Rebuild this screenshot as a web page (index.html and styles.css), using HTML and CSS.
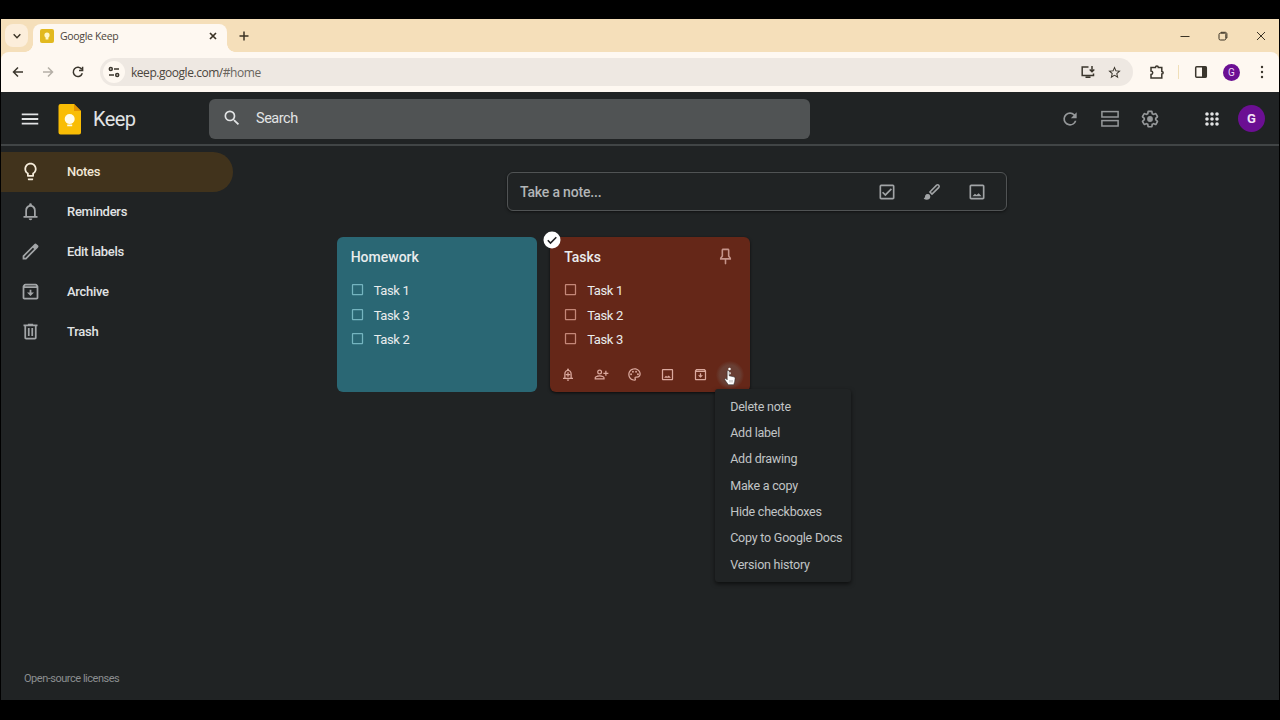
FILE: index.html
```html
<!DOCTYPE html>
<html lang="en">
<head>
<meta charset="utf-8">
<title>Google Keep</title>
<link rel="stylesheet" href="styles.css">
</head>
<body>
<svg class="defs" width="0" height="0" aria-hidden="true">
  <symbol id="archive" viewBox="0 0 24 24"><path d="M20.54 5.23l-1.39-1.68C18.88 3.21 18.47 3 18 3H6c-.47 0-.88.21-1.16.55L3.46 5.23C3.17 5.57 3 6.02 3 6.5V19c0 1.1.9 2 2 2h14c1.1 0 2-.9 2-2V6.5c0-.48-.17-.93-.46-1.27zM6.24 5h11.52l.83 1H5.42l.82-1zM5 19V8h14v11H5zm8-9h-2v3H8l4 4 4-4h-3v-3z"/></symbol>
  <symbol id="image" viewBox="0 0 24 24"><path d="M19 5v14H5V5h14m0-2H5c-1.1 0-2 .9-2 2v14c0 1.1.9 2 2 2h14c1.1 0 2-.9 2-2V5c0-1.1-.9-2-2-2zm-5 10.500l-2.500 2-2-1.500L6.500 17h11l-3.500-3.500z"/></symbol>
  <symbol id="box" viewBox="0 0 24 24"><path d="M19 5v14H5V5h14m0-2H5c-1.1 0-2 .9-2 2v14c0 1.100.9 2 2 2h14c1.100 0 2-.9 2-2V5c0-1.100-.9-2-2-2z"/></symbol>
</svg>
<div class="window">
  <div class="chrome">
  <div class="tabstrip">
    <div class="tab-search"><svg viewBox="0 0 12 12" width="10" height="10"><path class="line thick" d="M2 4l4 4 4-4"/></svg></div>
    <div class="tab">
      <svg class="favicon" viewBox="0 0 14 14" width="14" height="14"><rect width="14" height="14" rx="2" fill="#e2b91f"/><circle cx="7" cy="6" r="2.600" fill="#fff6c9"/><path d="M5.600 8h2.800v2.500H5.600z" fill="#fff6c9"/></svg>
      <span class="tab-title">Google Keep</span>
      <svg class="tab-close" viewBox="0 0 10 10" width="10" height="10"><path class="line thick" d="M2 2l6 6M8 2l-6 6"/></svg>
    </div>
    <svg class="new-tab" viewBox="0 0 12 12" width="12" height="12"><path class="line" d="M6 1.500v9M1.500 6h9"/></svg>
    <div class="win-controls">
      <svg viewBox="0 0 12 12" width="12" height="12"><path class="line thin" d="M1.500 6.500h9"/></svg>
      <svg viewBox="0 0 12 12" width="12" height="12"><rect class="line thin" x="2" y="3.200" width="6.800" height="6.800" rx="1.400"/><path class="line thin" d="M4 3V2.300h4.200c1 0 1.700.7 1.700 1.700v4H9"/></svg>
      <svg viewBox="0 0 12 12" width="12" height="12"><path class="line thin" d="M2 2l8 8M10 2l-8 8"/></svg>
    </div>
  </div>

  <div class="toolbar">
    <div class="nav">
      <svg viewBox="0 0 12 12" width="12" height="12"><path class="line" d="M11 6H1.500M6 1.500L1.500 6 6 10.500"/></svg>
      <svg class="faded" viewBox="0 0 12 12" width="12" height="12"><path class="line" d="M1 6h9.500M6 1.500L10.500 6 6 10.500"/></svg>
      <svg viewBox="0 0 12 12" width="12" height="12"><path class="line" d="M10.300 7.300A4.600 4.600 0 1 1 9.700 3.300M10.600.8v3.600H7"/></svg>
    </div>
    <div class="omnibox">
      <div class="site-info"><svg viewBox="0 0 12 12" width="12" height="12"><circle class="line" cx="2.800" cy="3" r="1.500"/><path class="line" d="M6 3h5M1 9h5"/><circle class="line" cx="9.200" cy="9" r="1.500"/></svg></div>
      <span class="url">keep.google.com/<em>#home</em></span>
      <svg class="install" viewBox="0 0 16 14" width="16" height="14"><path class="line" d="M8.500 2H2.200v8.500h11.300V8.500M5.500 12.300h5M12 1v5.500M9.700 4.500L12 6.700l2.300-2.200"/></svg>
      <svg class="star" viewBox="0 0 24 24" width="15" height="15"><path d="M22 9.240l-7.190-.62L12 2 9.190 8.630 2 9.240l5.460 4.730L5.820 21 12 17.270 18.180 21l-1.630-7.030L22 9.240zM12 15.400l-3.760 2.270 1-4.280-3.320-2.880 4.380-.38L12 6.100l1.710 4.040 4.380.38-3.320 2.880 1 4.280L12 15.400z"/></svg>
    </div>
    <svg class="ext" viewBox="0 0 16 16" width="16" height="16"><path class="line" d="M2 3.500h4.500c0-1.900 2.800-1.900 2.800 0h3.500v3.900c1.800 0 1.800 2.600 0 2.600v4H2v-3.600c2.300-.2 2.300-3.100 0-3.300z"/></svg>
    <i class="divider"></i>
    <svg class="panel" viewBox="0 0 14 14" width="14" height="14"><rect class="line" x="1.700" y="1.700" width="10.600" height="10.600" rx="1"/><path d="M8 1.700h4.500v10.600H8z"/></svg>
    <span class="profile">G</span>
    <svg class="kebab" viewBox="0 0 4 14" width="4" height="14"><circle cx="2" cy="2" r="1.200"/><circle cx="2" cy="7" r="1.200"/><circle cx="2" cy="12" r="1.200"/></svg>
  </div>
  </div>

  <header class="app-bar">
    <svg class="menu-btn" viewBox="0 0 24 24" width="22" height="22"><path d="M3 18h18v-2H3v2zm0-5h18v-2H3v2zm0-7v2h18V6H3z"/></svg>
    <svg class="logo" viewBox="0 0 24 32" width="24" height="32"><path d="M2.500 1H16l7 7v21.500a2 2 0 0 1-2 2H2.500a2 2 0 0 1-2-2V3a2 2 0 0 1 2-2z" fill="#f9bd05"/><path d="M16 1l7 7h-7z" fill="#e39400"/><circle cx="11.700" cy="16" r="5" fill="#fffbe8"/><path d="M9.200 19h5v1.300h-5zM9.200 21.500h5v1.700h-5z" fill="#fffbe8"/></svg>
    <span class="brand">Keep</span>
    <div class="search">
      <svg viewBox="0 0 24 24" width="20" height="20"><path d="M15.500 14h-.79l-.28-.27A6.471 6.471 0 0 0 16 9.500 6.500 6.500 0 1 0 9.500 16c1.610 0 3.090-.59 4.230-1.570l.27.28v.79l5 4.990L20.490 19l-4.990-5zm-6 0C7.010 14 5 11.990 5 9.500S7.010 5 9.500 5 14 7.010 14 9.500 11.990 14 9.500 14z"/></svg>
      <span>Search</span>
    </div>
    <div class="actions">
      <svg viewBox="0 0 24 24" width="20" height="20"><path d="M17.650 6.350A7.960 7.960 0 0 0 12 4a8 8 0 1 0 7.730 10h-2.080A5.990 5.990 0 0 1 12 18a6 6 0 1 1 0-12c1.660 0 3.140.69 4.220 1.780L13 11h7V4l-2.350 2.350z"/></svg>
      <svg viewBox="0 0 20 20" width="20" height="20"><rect class="line" x="1.900" y="2.600" width="16.200" height="5.400"/><rect class="line" x="1.900" y="11.600" width="16.200" height="5.400"/></svg>
      <svg viewBox="0 0 24 24" width="20" height="20"><path d="M13.850 22.250h-3.700c-.74 0-1.360-.54-1.450-1.270l-.27-1.890c-.27-.14-.53-.29-.79-.46l-1.800.72c-.7.26-1.470-.03-1.810-.65L2.200 15.530c-.35-.66-.2-1.440.36-1.880l1.530-1.190c-.01-.15-.02-.3-.02-.46 0-.15.010-.31.020-.46l-1.520-1.190c-.59-.45-.74-1.260-.37-1.880l1.850-3.190c.34-.62 1.110-.9 1.790-.63l1.810.73c.26-.17.52-.32.78-.46l.27-1.910c.09-.7.710-1.250 1.440-1.250h3.700c.74 0 1.360.54 1.450 1.270l.27 1.890c.27.14.53.29.79.46l1.800-.72c.71-.26 1.480.03 1.820.65l1.840 3.180c.36.66.2 1.440-.36 1.880l-1.520 1.190c.01.150.02.3.02.46s-.01.310-.02.460l1.520 1.190c.56.45.72 1.230.37 1.860l-1.860 3.220c-.34.620-1.110.9-1.800.630l-1.800-.72c-.26.17-.52.320-.78.460l-.27 1.910c-.1.680-.72 1.220-1.460 1.220zm-3.230-2h2.760l.37-2.550.53-.22c.44-.18.88-.44 1.340-.78l.45-.34 2.380.96 1.380-2.400-2.030-1.580.07-.56c.03-.26.06-.51.06-.78s-.03-.53-.06-.78l-.07-.56 2.030-1.580-1.390-2.400-2.390.96-.45-.35c-.42-.32-.87-.58-1.330-.77l-.52-.22-.37-2.550h-2.760l-.37 2.550-.53.210c-.44.190-.88.440-1.340.790l-.45.330-2.380-.95-1.390 2.390 2.030 1.580-.07.560a7 7 0 0 0-.06.790c0 .26.020.53.060.780l.07.560-2.030 1.580 1.380 2.400 2.390-.96.45.350c.43.330.86.580 1.330.770l.53.220.38 2.550z"/><circle cx="12" cy="12" r="3.500"/></svg>
      <svg class="apps" viewBox="0 0 24 24" width="20" height="20"><g><circle cx="6" cy="6" r="2.150"/><circle cx="12" cy="6" r="2.150"/><circle cx="18" cy="6" r="2.150"/><circle cx="6" cy="12" r="2.150"/><circle cx="12" cy="12" r="2.150"/><circle cx="18" cy="12" r="2.150"/><circle cx="6" cy="18" r="2.150"/><circle cx="12" cy="18" r="2.150"/><circle cx="18" cy="18" r="2.150"/></g></svg>
      <span class="avatar">G</span>
    </div>
  </header>

  <div class="body">
    <aside class="sidebar">
      <a class="item active"><svg viewBox="0 0 24 24"><path d="M9 21c0 .5.4 1 1 1h4c.6 0 1-.5 1-1v-1H9v1zm3-19C8.100 2 5 5.100 5 9c0 2.400 1.200 4.500 3 5.700V17c0 .5.4 1 1 1h6c.6 0 1-.5 1-1v-2.300c1.800-1.300 3-3.400 3-5.700 0-3.900-3.100-7-7-7zm2.900 11.100l-.9.6V16h-4v-2.300l-.9-.6C7.800 12.200 7 10.600 7 9c0-2.800 2.200-5 5-5s5 2.200 5 5c0 1.600-.8 3.200-2.100 4.100z"/></svg><span>Notes</span></a>
      <a class="item"><svg viewBox="0 0 24 24"><path d="M18 17v-6c0-3.070-1.630-5.640-4.500-6.320V4a1.500 1.500 0 0 0-3 0v.68C7.640 5.360 6 7.920 6 11v6H4v2h16v-2h-2zm-2 0H8v-6c0-2.480 1.510-4.500 4-4.500s4 2.020 4 4.500v6zm-4 5c1.100 0 2-.9 2-2h-4c0 1.100.9 2 2 2z"/></svg><span>Reminders</span></a>
      <a class="item"><svg viewBox="0 0 24 24"><path d="M20.410 4.940l-1.350-1.350a2 2 0 0 0-2.830 0L3 16.820V21h4.180L20.410 7.770a2 2 0 0 0 0-2.830zM6.350 19H5v-1.350l9.820-9.820 1.350 1.350L6.350 19z"/></svg><span>Edit labels</span></a>
      <a class="item"><svg><use href="#archive"/></svg><span>Archive</span></a>
      <a class="item"><svg viewBox="0 0 24 24"><path d="M15 4V3H9v1H4v2h1v13c0 1.100.9 2 2 2h10c1.100 0 2-.9 2-2V6h1V4h-5zm2 15H7V6h10v13zM9 8h2v9H9zm4 0h2v9h-2z"/></svg><span>Trash</span></a>
      <span class="licenses">Open-source licenses</span>
    </aside>

    <main class="content">
      <div class="composer">
        <span>Take a note...</span>
        <svg viewBox="0 0 24 24"><path d="M19 3H5a2 2 0 0 0-2 2v14c0 1.100.9 2 2 2h14c1.100 0 2-.9 2-2V5a2 2 0 0 0-2-2zm0 16H5V5h14v14zM18 9l-1.400-1.400-6.600 6.600-2.600-2.600L6 13l4 4z"/></svg>
        <svg viewBox="0 0 24 24"><path d="M2 20c3 2.500 8 1.500 8-2.600a3.200 3.200 0 0 0-6-1.400C3.500 17.300 4 18.900 2 20z"/><path fill="none" stroke="currentColor" stroke-width="1.900" d="M9.500 12l8-8.200c2-1.300 4 .7 2.700 2.700L12 14.500z"/></svg>
        <svg><use href="#image"/></svg>
      </div>

      <div class="notes">
        <article class="note teal">
          <h2>Homework</h2>
          <ul>
            <li><svg><use href="#box"/></svg>Task 1</li>
            <li><svg><use href="#box"/></svg>Task 3</li>
            <li><svg><use href="#box"/></svg>Task 2</li>
          </ul>
        </article>
        <article class="note red">
          <svg class="selected" viewBox="0 0 18 18" width="18" height="18"><circle cx="9" cy="9" r="8.500" fill="#fff"/><path d="M4.800 9.300l2.700 2.700 5.800-5.800" fill="none" stroke="#202124" stroke-width="1.600"/></svg>
          <h2>Tasks<svg class="pin" viewBox="0 0 24 24" width="19" height="19"><path d="M17 4v7l2 3v2h-6v5l-1 1-1-1v-5H5v-2l2-3V4c0-1.100.9-2 2-2h6c1.110 0 2 .89 2 2zM9 4v7.750L7.500 14h9L15 11.750V4H9z"/></svg></h2>
          <ul>
            <li><svg><use href="#box"/></svg>Task 1</li>
            <li><svg><use href="#box"/></svg>Task 2</li>
            <li><svg><use href="#box"/></svg>Task 3</li>
          </ul>
          <div class="note-tools">
            <svg viewBox="0 0 24 24"><path d="M18 17v-6c0-3.070-1.630-5.640-4.500-6.320V4a1.500 1.500 0 0 0-3 0v.68C7.640 5.360 6 7.920 6 11v6H4v2h16v-2h-2zm-2 0H8v-6c0-2.480 1.510-4.500 4-4.500s4 2.020 4 4.500v6zm-4 5c1.100 0 2-.9 2-2h-4c0 1.100.9 2 2 2zM11 8.500h2V11h2.500v2H13v2.500h-2V13H8.500v-2H11z"/></svg>
            <svg viewBox="0 0 24 24"><path d="M9 12a4 4 0 1 0 0-8 4 4 0 0 0 0 8zm0-6a2 2 0 1 1 0 4 2 2 0 0 1 0-4zm0 7c-2.670 0-8 1.340-8 4v3h16v-3c0-2.660-5.330-4-8-4zm6 5H3v-.99C3.200 16.290 6.300 15 9 15s5.800 1.290 6 2v1zM18 6h2v3h3v2h-3v3h-2v-3h-3V9h3z"/></svg>
            <svg viewBox="0 0 24 24"><path d="M12 22C6.490 22 2 17.510 2 12S6.490 2 12 2s10 4.040 10 9c0 3.310-2.690 6-6 6h-1.770c-.28 0-.5.22-.5.5 0 .12.050.23.130.33.41.47.64 1.060.64 1.670A2.500 2.500 0 0 1 12 22zm0-18c-4.410 0-8 3.590-8 8s3.590 8 8 8c.28 0 .5-.22.5-.5a.54.54 0 0 0-.14-.35c-.41-.46-.63-1.050-.63-1.650a2.500 2.500 0 0 1 2.500-2.500H16c2.210 0 4-1.790 4-4 0-3.860-3.590-7-8-7z"/><circle cx="6.500" cy="11.500" r="1.500"/><circle cx="9.500" cy="7.500" r="1.500"/><circle cx="14.500" cy="7.500" r="1.500"/><circle cx="17.500" cy="11.500" r="1.500"/></svg>
            <svg><use href="#image"/></svg>
            <svg><use href="#archive"/></svg>
            <span class="more">
              <svg viewBox="0 0 24 24"><path d="M12 1a2 2 0 1 1 0 4 2 2 0 0 1 0-4zm0 7a2 2 0 1 1 0 4 2 2 0 0 1 0-4z"/></svg>
              <svg class="cursor" viewBox="0 0 12 16"><path d="M3.200 1.500c0-1.300 2-1.300 2 0v4.300l4.500 1c1 .2 1.500.9 1.400 1.800l-.5 3.300-.9 2.800H4.300L1 10.100c-.8-1 .5-2 1.300-1.200l.9.900z" fill="#fff" stroke="#222" stroke-width=".5"/><path d="M6 10v2.500M8 10v2.500" stroke="#777" stroke-width=".6"/></svg>
            </span>
          </div>
          <div class="menu">
            <span>Delete note</span>
            <span>Add label</span>
            <span>Add drawing</span>
            <span>Make a copy</span>
            <span>Hide checkboxes</span>
            <span>Copy to Google Docs</span>
            <span>Version history</span>
          </div>
        </article>
      </div>
    </main>
  </div>
</div>
</body>
</html>
```
FILE: styles.css
```css
* { box-sizing: border-box; }
body {
  margin: 0;
  height: 720px;
  padding: 19px 1px;
  background: #000;
  overflow: hidden;
  font-family: Roboto, "Liberation Sans", sans-serif;
}
svg { display: block; flex: none; fill: currentColor; }
.defs { position: absolute; }
.line { fill: none; stroke: currentColor; stroke-width: 1.5; }
.thin { stroke-width: 1; }
.thick { stroke-width: 1.700; }

.window { display: flex; flex-direction: column; height: 681px; background: #202324; }

/* Browser chrome */
.chrome { background: #f5dfba; }
.tabstrip {
  display: flex;
  align-items: center;
  height: 33px;
  color: #3b3325;
  font-family: "Open Sans", "Noto Sans", sans-serif;
}
.tab-search {
  display: grid;
  place-items: center;
  width: 23px;
  height: 23px;
  margin-left: 4px;
  border-radius: 8px;
  background: #fceedb;
}
.tab {
  position: relative;
  display: flex;
  align-items: center;
  align-self: flex-end;
  width: 194px;
  height: 28px;
  margin-left: 5px;
  padding: 0 9px 5px 7px;
  border-radius: 8px 8px 0 0;
  background: #fef8f1;
}
.tab::before, .tab::after {
  content: "";
  position: absolute;
  bottom: 0;
  width: 8px;
  height: 8px;
}
.tab::before { right: 100%; background: radial-gradient(circle at 0 0, #0000 7.500px, #fef8f1 8px); }
.tab::after { left: 100%; background: radial-gradient(circle at 100% 0, #0000 7.500px, #fef8f1 8px); }
.tab-title { margin-left: 6px; font-size: 10.500px; letter-spacing: -.45px; color: #4c453b; }
.tab-close { margin-left: auto; }
.new-tab { margin-left: 11px; }
.win-controls { display: flex; gap: 26px; margin: 0 12px 0 auto; }

.toolbar {
  display: flex;
  align-items: center;
  height: 40px;
  padding-right: 15px;
  background: #fef8f1;
  border-radius: 8px 8px 0 0;
  color: #3b362d;
}
.nav { display: flex; gap: 18px; margin-left: 11px; }
.faded { color: #b5afa7; }
.omnibox {
  display: flex;
  align-items: center;
  width: 1033px;
  height: 28px;
  margin-left: 16px;
  padding: 0 11px 0 3px;
  border-radius: 14px;
  background: #eee8e2;
}
.site-info {
  display: grid;
  place-items: center;
  width: 22px;
  height: 22px;
  border-radius: 50%;
  background: #fef8f1;
}
.url { margin-left: 6px; font: 12px "Open Sans", "Noto Sans", sans-serif; letter-spacing: -.46px; color: #4b463e; }
.tab-title { letter-spacing: -.32px; }
.url em { font-style: normal; color: #6a655e; }
.install { margin-left: auto; }
.star { margin-left: 11px; }
.ext { margin-left: 16px; }
.divider { width: 1px; height: 14px; margin: 0 15px 0 13px; background: #f0dfb9; }
.profile {
  display: grid;
  place-items: center;
  width: 17px;
  height: 17px;
  margin: 0 20px 0 15px;
  border-radius: 50%;
  background: #6b0f93;
  color: #efd9f7;
  font-size: 10px;
}

/* App bar */
.app-bar {
  display: flex;
  align-items: center;
  height: 54px;
  padding: 1px 7px 0 18px;
  border-bottom: 2px solid #414546;
  color: #e2e4e5;
}
.logo { margin-left: 17px; }
.brand { width: 115.500px; margin-left: 11px; font-size: 20px; letter-spacing: -.6px; }
.search {
  display: flex;
  align-items: center;
  gap: 14px;
  width: 601.500px;
  height: 40px;
  padding: 0 0 1px 13.500px;
  border-radius: 6px;
  background: #505354;
  font-size: 14.500px;
  letter-spacing: -.48px;
}
.actions { display: flex; align-items: center; margin-left: auto; color: #95989a; }
.actions > * { margin: 0 10px; }
.actions .apps { margin: 0 10px 0 32px; color: #e2e4e5; }
.actions .avatar {
  display: grid;
  place-items: center;
  width: 27px;
  height: 27px;
  margin: 0 7px 0 6px;
  border-radius: 50%;
  background: #6b0f93;
  color: #f3e3f8;
  font-size: 13px;
  font-weight: 700;
}

/* Sidebar */
.body { display: flex; flex: 1; }
.sidebar { display: flex; flex-direction: column; width: 232px; padding: 6px 0 13px; }
.item {
  display: flex;
  align-items: center;
  height: 40px;
  gap: 26px;
  padding-left: 19px;
  border-radius: 0 20px 20px 0;
  color: #e1e3e4;
  font-size: 13px;
  font-weight: 500;
  letter-spacing: -.28px;
}
.item span { padding-bottom: 1px; }
.item svg { width: 21px; height: 21px; margin-bottom: 1px; color: #a2a5a7; }
.item.active { background: #41331c; color: #f1e8d6; }
.item.active svg { color: #f6eddb; }
.licenses { margin: auto 0 0 23px; font-size: 11px; line-height: 16px; letter-spacing: -.48px; color: #8b8e90; }

/* Notes */
.content { flex: 1; padding-top: 26px; }
.composer {
  display: flex;
  align-items: center;
  width: 500px;
  height: 39px;
  margin-left: 274px;
  padding: 0 19px 0 12px;
  border: 1px solid #505354;
  border-radius: 6px;
  box-shadow: 0 1px 3px #0008;
  color: #a1a4a6;
}
.composer span { margin-right: auto; font-size: 14px; font-weight: 500; letter-spacing: -.18px; color: #b2b5b7; }
.composer svg { width: 20px; height: 20px; margin-left: 25px; }
.notes { display: flex; gap: 13.500px; margin: 26px 0 0 103.700px; }
.note {
  position: relative;
  width: 200px;
  height: 155px;
  padding: 10px 14px 0;
  border-radius: 6px;
  color: #e9eced;
}
.teal { background: #2a6774; }
.red { background: #652718; box-shadow: 0 1px 3px #000a; }
.note h2 { display: flex; height: 21px; margin: 0; font-size: 14px; font-weight: 500; line-height: 21px; }
.pin { margin: 0 0 0 auto; color: #c5948a; }
.red h2 { padding-right: 1px; }
.note ul { margin: 10.500px 0 0; padding: 0; list-style: none; }
.note li { display: flex; align-items: center; height: 24.400px; font-size: 13px; letter-spacing: -.38px; }
.note li svg { width: 15px; height: 15px; margin: -2px 9px 0 -1px; }
.teal li svg { color: #74b4bf; }
.red li svg { color: #c48778; }
.selected { position: absolute; left: -7px; top: -6px; }
.note-tools { display: flex; align-items: center; gap: 18px; height: 28px; margin: 9px -10px 0 -4.700px; color: #dba99e; }
.note-tools svg { width: 15px; height: 15px; }
.note-tools > svg:first-child { width: 16px; }
.more {
  position: relative;
  display: grid;
  place-items: center;
  width: 28px;
  height: 28px;
  margin-left: -10px;
  border-radius: 50%;
  background: radial-gradient(circle, #693f34 50%, #652718 72%);
  color: #fff;
}
.note-tools .cursor { position: absolute; left: 8px; top: 9px; width: 12px; height: 16px; }
.menu {
  position: absolute;
  left: 165px;
  top: 152px;
  display: flex;
  flex-direction: column;
  width: 136px;
  padding: 4.500px 0 4.500px 15px;
  border-radius: 3px;
  background: #202324;
  box-shadow: 0 2px 4px #0009;
  font-size: 12.500px;
  line-height: 26.350px;
  letter-spacing: -.22px;
  color: #c2c5c6;
  white-space: nowrap;
}
```
